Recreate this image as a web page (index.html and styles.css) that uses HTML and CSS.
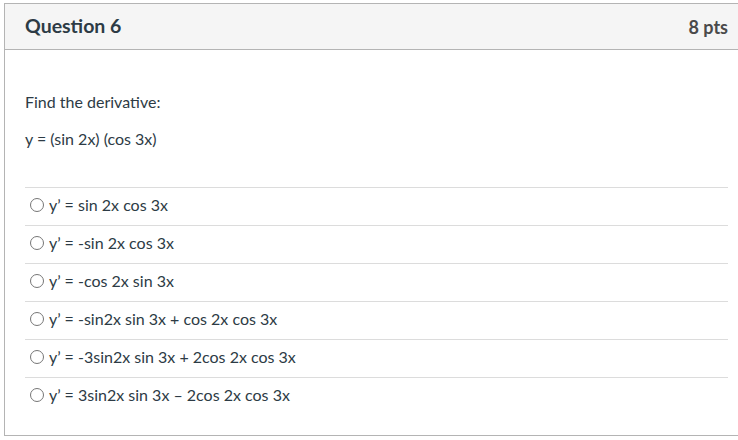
FILE: index.html
```html
<!DOCTYPE html>
<html>
<head>
<meta charset="utf-8">
<link rel="stylesheet" href="styles.css">
</head>
<body>
<div class="question">
  <div class="q-header">
    <span class="q-title">Question 6</span>
    <span class="q-pts">8 pts</span>
  </div>
  <div class="q-body">
    <p class="q-text first">Find the derivative:</p>
    <p class="q-text">y = (sin 2x) (cos 3x)</p>
    <div class="answers">
      <div class="answer"><span class="radio"></span><span>y’ = sin 2x cos 3x</span></div>
      <div class="answer"><span class="radio"></span><span>y’ = -sin 2x cos 3x</span></div>
      <div class="answer"><span class="radio"></span><span>y’ = -cos 2x sin 3x</span></div>
      <div class="answer"><span class="radio"></span><span>y’ = -sin2x sin 3x + cos 2x cos 3x</span></div>
      <div class="answer"><span class="radio"></span><span>y’ = -3sin2x sin 3x + 2cos 2x cos 3x</span></div>
      <div class="answer"><span class="radio"></span><span>y’ = 3sin2x sin 3x – 2cos 2x cos 3x</span></div>
    </div>
  </div>
</div>
</body>
</html>
```
FILE: styles.css
```css
html, body {
  margin: 0;
  padding: 0;
  overflow: hidden;
  background: #ffffff;
}
body {
  font-family: Lato, "Open Sans", sans-serif;
  color: #2d3b45;
}
.question {
  margin: 3px 0 0 4px;
  border: 1px solid #b4b4b4;
  border-right: 0;
  height: 433px;
  box-sizing: border-box;
}
.q-header {
  height: 45px;
  background: #f5f5f5;
  border-bottom: 1px solid #b4b4b4;
  display: flex;
  align-items: center;
  justify-content: space-between;
  padding: 0 10px 0 20px;
}
.q-title {
  font-size: 19.5px;
  font-weight: 700;
  margin-bottom: 3px;
}
.q-pts {
  font-size: 18px;
  font-weight: 700;
  color: #4a4a4a;
}
.q-body {
  padding: 42px 10px 0 20px;
}
.q-text {
  margin: 0 0 17px 0;
  font-size: 16px;
  line-height: 20px;
}
.answers {
  margin-top: 38px;
}
.answer {
  border-top: 1px solid #dcdcdc;
  height: 38px;
  box-sizing: border-box;
  padding: 0 0 4px 5px;
  display: flex;
  align-items: center;
  font-size: 16px;
}
.radio {
  width: 12px;
  height: 12px;
  border: 1.5px solid #767676;
  border-radius: 50%;
  margin-right: 5px;
  flex: none;
}
```
